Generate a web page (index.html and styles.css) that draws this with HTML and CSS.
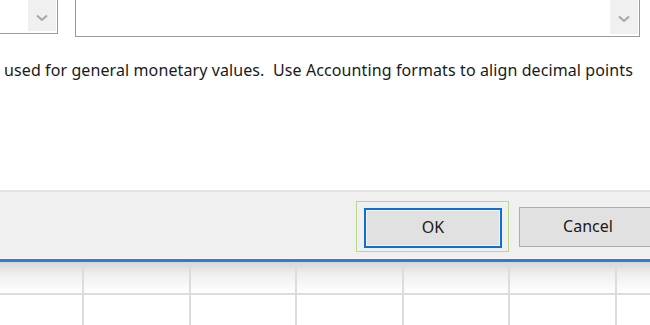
FILE: index.html
```html
<!DOCTYPE html>
<html lang="en">
  <head>
    <meta charset="UTF-8" />
    <meta name="viewport" content="width=device-width, initial-scale=1.0" />
    <title>Format Cells</title>

    <link rel="stylesheet" href="styles.css">
  </head>
  <body>
    <div class="dialog">
      <div class="top-row">
        <div class="select select-small">
          <span class="drop">
            <svg width="12" height="8" viewBox="0 0 12 8"><path d="M1 1.5 L6 6 L11 1.5" fill="none" stroke="#a6a6a6" stroke-width="2"/></svg>
          </span>
        </div>
        <div class="select select-wide">
          <span class="drop">
            <svg width="12" height="8" viewBox="0 0 12 8"><path d="M1 1.5 L6 6 L11 1.5" fill="none" stroke="#a6a6a6" stroke-width="2"/></svg>
          </span>
        </div>
      </div>

      <p class="desc">used for general monetary values.&nbsp; Use Accounting formats to align decimal points</p>

      <div class="footer">
        <div class="focus-ring">
          <button class="btn btn-ok">OK</button>
        </div>
        <button class="btn btn-cancel">Cancel</button>
      </div>
    </div>

    <div class="sheet">
      <div class="sheet-row row-first">
        <div class="cell c1"></div>
        <div class="cell c2"></div>
        <div class="cell c3"></div>
        <div class="cell c2"></div>
        <div class="cell c3"></div>
        <div class="cell c2"></div>
        <div class="cell cell-last"></div>
      </div>
      <div class="sheet-row">
        <div class="cell c1"></div>
        <div class="cell c2"></div>
        <div class="cell c3"></div>
        <div class="cell c2"></div>
        <div class="cell c3"></div>
        <div class="cell c2"></div>
        <div class="cell cell-last"></div>
      </div>
    </div>
  </body>
</html>
```

FILE: styles.css
```css
body {
  margin: 0;
  width: 650px;
  height: 325px;
  overflow: hidden;
  background-color: white;
  font-family: "Noto Sans", "Open Sans", sans-serif;
  color: #1a1a1a;
}

.dialog {
  background-color: white;
}

.top-row {
  display: flex;
  align-items: flex-start;
  height: 37px;
}

.select {
  display: flex;
  justify-content: flex-end;
  align-items: flex-start;
  box-sizing: border-box;
  background-color: white;
  border: 1px solid #9a9a9a;
  border-top: none;
}

.select-small {
  width: 58px;
  height: 34px;
  border-left: none;
  padding-right: 1px;
}

.select-wide {
  width: 565px;
  height: 37px;
  margin-left: 17px;
  padding-right: 1px;
}

.drop {
  display: flex;
  align-items: center;
  justify-content: center;
  width: 28px;
  height: calc(100% - 2px);
  background-color: #f0f0f0;
  padding-top: 4px;
  box-sizing: border-box;
}

.desc {
  margin: 23px 0 0 4px;
  font-size: 16px;
  line-height: 21px;
  white-space: nowrap;
  letter-spacing: 0.1px;
}

.footer {
  display: flex;
  align-items: center;
  justify-content: flex-end;
  margin-top: 109px;
  height: 64px;
  border-top: 2px solid #e3e3e3;
  border-bottom: 1px solid #f8f8f8;
  background-color: #f0f0f0;
  padding-top: 2px;
  box-sizing: content-box;
}

.focus-ring {
  box-sizing: border-box;
  width: 153px;
  height: 51px;
  padding: 6px 6px 5px 7px;
  border: 1px solid #b6d98e;
}

.btn {
  box-sizing: border-box;
  width: 138px;
  height: 40px;
  font-family: "Noto Sans", "Open Sans", sans-serif;
  font-size: 16px;
  color: #1a1a1a;
  background-color: #e1e1e1;
  padding: 0 0 2px;
}

.btn-ok {
  border: 2px solid #0b6fd7;
  box-shadow: inset 0 0 0 1px #f4f4f4;
}

.btn-cancel {
  margin-left: 10px;
  margin-right: -7px;
  margin-top: 2px;
  border: 1px solid #adadad;
}

.sheet {
  border-top: 3px solid #2b7cd3;
}

.sheet-row {
  display: flex;
  height: 33px;
  border-bottom: 2px solid #dcdcdc;
}

.row-first {
  height: 31px;
  background: linear-gradient(#d6d6d6, #efefef 40%, #ffffff);
}

.cell {
  flex: none;
  box-sizing: border-box;
  border-right: 2px solid #dcdcdc;
}

.cell-last {
  flex: 1;
  border-right: none;
}

.c1 {
  width: 84px;
}

.c2 {
  width: 107px;
}

.c3 {
  width: 106px;
}
```
